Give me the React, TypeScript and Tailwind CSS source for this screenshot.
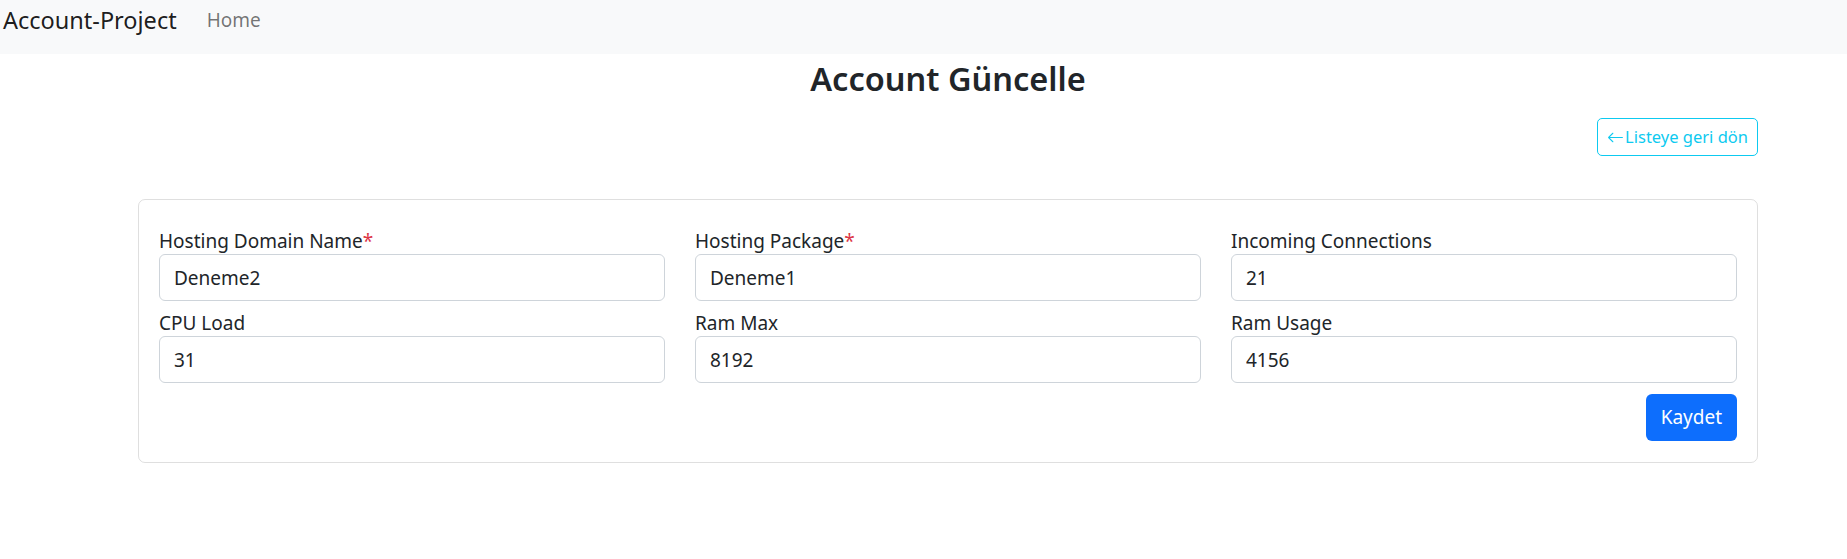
import React from "react";

const fields: { label: string; value: string; required?: boolean }[] = [
  { label: "Hosting Domain Name", value: "Deneme2", required: true },
  { label: "Hosting Package", value: "Deneme1", required: true },
  { label: "Incoming Connections", value: "21" },
  { label: "CPU Load", value: "31" },
  { label: "Ram Max", value: "8192" },
  { label: "Ram Usage", value: "4156" },
];

export default function App() {
  return (
    <div
      className="min-h-[559px] bg-white text-[#212529]"
      style={{ fontFamily: '"Segoe UI", "Noto Sans", "Open Sans", sans-serif' }}
    >
      <nav className="h-[54px] bg-[#f8f9fa] flex items-start pt-[2px] pl-[3px]">
        <span className="text-[23.5px] leading-[37px] text-black/90 mr-[30px]">Account-Project</span>
        <a className="text-[19px] leading-[37px] text-black/55">Home</a>
      </nav>
      <div className="ml-[138px] w-[1620px]">
        <h3 className="mt-[4px] text-center text-[32.5px] font-semibold leading-[42px]">Account Güncelle</h3>
        <div className="flex justify-end mt-[18px]">
          <button className="flex items-center h-[38px] px-[9px] border border-[#0dcaf0] rounded-[5px] text-[#0dcaf0] text-[16.5px] leading-[26px]">
            <svg width="17" height="17" viewBox="0 0 16 16" fill="currentColor" className="mr-[1px]">
              <path
                fillRule="evenodd"
                d="M15 8a.5.5 0 0 0-.5-.5H2.707l3.147-3.146a.5.5 0 1 0-.708-.708l-4 4a.5.5 0 0 0 0 .708l4 4a.5.5 0 0 0 .708-.708L2.707 8.5H14.5A.5.5 0 0 0 15 8z"
              />
            </svg>
            Listeye geri dön
          </button>
        </div>
        <div className="mt-[43px] border border-black/[.125] rounded-[7px] px-[20px] pt-[24px] pb-[21px]">
          <div className="grid grid-cols-3 gap-x-[30px]">
            {fields.map((f) => (
              <div key={f.label} className="flex flex-col">
                <label className="text-[19px] leading-[26px] pt-[4px]">
                  {f.label}
                  {f.required && <span className="text-[#dc3545]">*</span>}
                </label>
                <input
                  readOnly
                  defaultValue={f.value}
                  className="h-[47px] border border-[#ced4da] rounded-[6px] px-[14px] text-[19px] text-[#212529] mb-[5px] outline-none"
                  style={{ fontFamily: "inherit" }}
                />
              </div>
            ))}
          </div>
          <div className="flex justify-end mt-[6px]">
            <button className="h-[47px] px-[15px] bg-[#0d6efd] text-white text-[19px] rounded-[6px]">Kaydet</button>
          </div>
        </div>
      </div>
    </div>
  );
}
